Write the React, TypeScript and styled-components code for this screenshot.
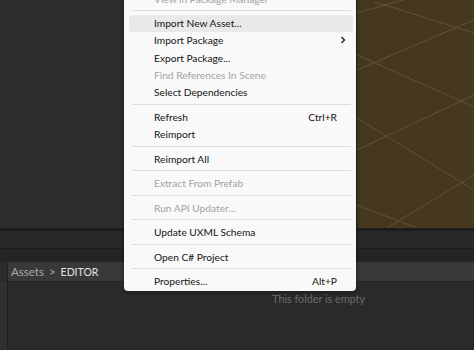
import React from "react";
import styled, { createGlobalStyle } from "styled-components";

const Global = createGlobalStyle`
  html, body { margin: 0; padding: 0; background: #2d2d2d; }
  body { font-family: Lato, "Noto Sans", sans-serif; }
`;

const Page = styled.div`
  position: relative;
  width: 474px;
  height: 350px;
  overflow: hidden;
  display: flex;
  flex-direction: column;
  background: #2d2d2d;
`;

const TopArea = styled.div`
  height: 228px;
  display: flex;
`;

const LeftArea = styled.div`
  flex: 1;
  background: #2e2e2e;
`;

const SceneView = styled.div`
  width: 117px;
  background: #45381f;
  border-left: 1px solid #262626;
  display: flex;
`;

const HLine = styled.div<{ $h: number; $c: string }>`
  height: ${(p) => p.$h}px;
  background: ${(p) => p.$c};
`;

const TabBar = styled.div`
  height: 17px;
  background: #29292b;
`;

const Toolbar = styled.div`
  height: 13px;
  background: #242424;
`;

const SplitRow = styled.div<{ $h?: number; $grow?: boolean }>`
  display: flex;
  ${(p) => (p.$grow ? "flex: 1;" : `height: ${p.$h}px;`)}
`;

const SideCol = styled.div<{ $c: string }>`
  width: 7px;
  background: ${(p) => p.$c};
  border-right: 1px solid #1f1f1f;
`;

const Breadcrumb = styled.div`
  flex: 1;
  background: #393939;
  display: flex;
  align-items: center;
  gap: 5px;
  padding-left: 3px;
  font-size: 11.5px;
  border-bottom: 1px solid #242424;
`;

const Crumb = styled.span<{ $active?: boolean }>`
  color: ${(p) => (p.$active ? "#e2e2e2" : "#a8a8a8")};
  font-size: ${(p) => (p.$active ? "10.5px" : "11.5px")};
  font-weight: 400;
`;

const Content = styled.div`
  flex: 1;
  background: #2a2a2a;
  display: flex;
  justify-content: flex-end;
  padding-top: 10px;
  padding-right: 109px;
`;

const EmptyText = styled.span`
  color: #6c6c6c;
  font-size: 10.8px;
`;

const Menu = styled.div`
  position: absolute;
  left: 124px;
  top: -14px;
  width: 232px;
  padding: 4px 0 1px;
  background: #f9f9f9;
  border-radius: 4px;
  box-shadow: 0 1px 4px rgba(0, 0, 0, 0.45);
  display: flex;
  flex-direction: column;
  font-size: 10.2px;
`;

const Item = styled.div<{ $disabled?: boolean; $hover?: boolean }>`
  height: 17.25px;
  margin: 0 3px 0 5px;
  padding: 0 16px 0 25px;
  border-radius: 3px;
  display: flex;
  align-items: center;
  justify-content: space-between;
  color: ${(p) => (p.$disabled ? "#a3a3a3" : "#141414")};
  background: ${(p) => (p.$hover ? "#e9e9e9" : "transparent")};
`;

const Shortcut = styled.span`
  color: #141414;
`;

const Arrow = styled.svg`
  margin-right: -9px;
`;

const Separator = styled.div`
  height: 7.3px;
  display: flex;
  align-items: center;
  margin: 0 5px 0 8px;
  &::after {
    content: "";
    flex: 1;
    height: 1px;
    background: #dcdcdc;
  }
`;

type Entry =
  | { sep: true }
  | { label: string; disabled?: boolean; hover?: boolean; shortcut?: string; sub?: boolean };

const entries: Entry[] = [
  { label: "View in Package Manager", disabled: true },
  { sep: true },
  { label: "Import New Asset...", hover: true },
  { label: "Import Package", sub: true },
  { label: "Export Package..." },
  { label: "Find References In Scene", disabled: true },
  { label: "Select Dependencies" },
  { sep: true },
  { label: "Refresh", shortcut: "Ctrl+R" },
  { label: "Reimport" },
  { sep: true },
  { label: "Reimport All" },
  { sep: true },
  { label: "Extract From Prefab", disabled: true },
  { sep: true },
  { label: "Run API Updater...", disabled: true },
  { sep: true },
  { label: "Update UXML Schema" },
  { sep: true },
  { label: "Open C# Project" },
  { sep: true },
  { label: "Properties...", shortcut: "Alt+P" },
];

const gridLines: [number, number, number, number][] = [
  [0, 13, 46, 0],
  [18, 2, 117, 33],
  [0, 70, 117, 20],
  [0, 55, 117, 107],
  [0, 150, 117, 95],
  [0, 118, 117, 190],
  [30, 228, 117, 175],
  [0, 205, 60, 228],
];

export default function App() {
  return (
    <>
      <Global />
      <Page>
        <TopArea>
          <LeftArea />
          <SceneView>
            <svg width="117" height="228" viewBox="0 0 117 228">
              {gridLines.map(([x1, y1, x2, y2], i) => (
                <line key={i} x1={x1} y1={y1} x2={x2} y2={y2} stroke="#62523a" strokeWidth="1" />
              ))}
            </svg>
          </SceneView>
        </TopArea>
        <HLine $h={3} $c="#1c1c1c" />
        <TabBar />
        <HLine $h={1} $c="#1d1d1d" />
        <Toolbar />
        <SplitRow $h={20}>
          <SideCol $c="#2b2b2b" />
          <Breadcrumb>
            <Crumb>Assets</Crumb>
            <Crumb>&gt;</Crumb>
            <Crumb $active>EDITOR</Crumb>
          </Breadcrumb>
        </SplitRow>
        <SplitRow $grow>
          <SideCol $c="#303030" />
          <Content>
            <EmptyText>This folder is empty</EmptyText>
          </Content>
        </SplitRow>
        <Menu>
          {entries.map((e, i) =>
            "sep" in e ? (
              <Separator key={i} />
            ) : (
              <Item key={i} $disabled={e.disabled} $hover={e.hover}>
                <span>{e.label}</span>
                {e.shortcut && <Shortcut>{e.shortcut}</Shortcut>}
                {e.sub && (
                  <Arrow width="6" height="8" viewBox="0 0 6 8">
                    <path d="M1.5 1 L4.5 4 L1.5 7" fill="none" stroke="#1b1b1b" strokeWidth="1.3" />
                  </Arrow>
                )}
              </Item>
            )
          )}
        </Menu>
      </Page>
    </>
  );
}
